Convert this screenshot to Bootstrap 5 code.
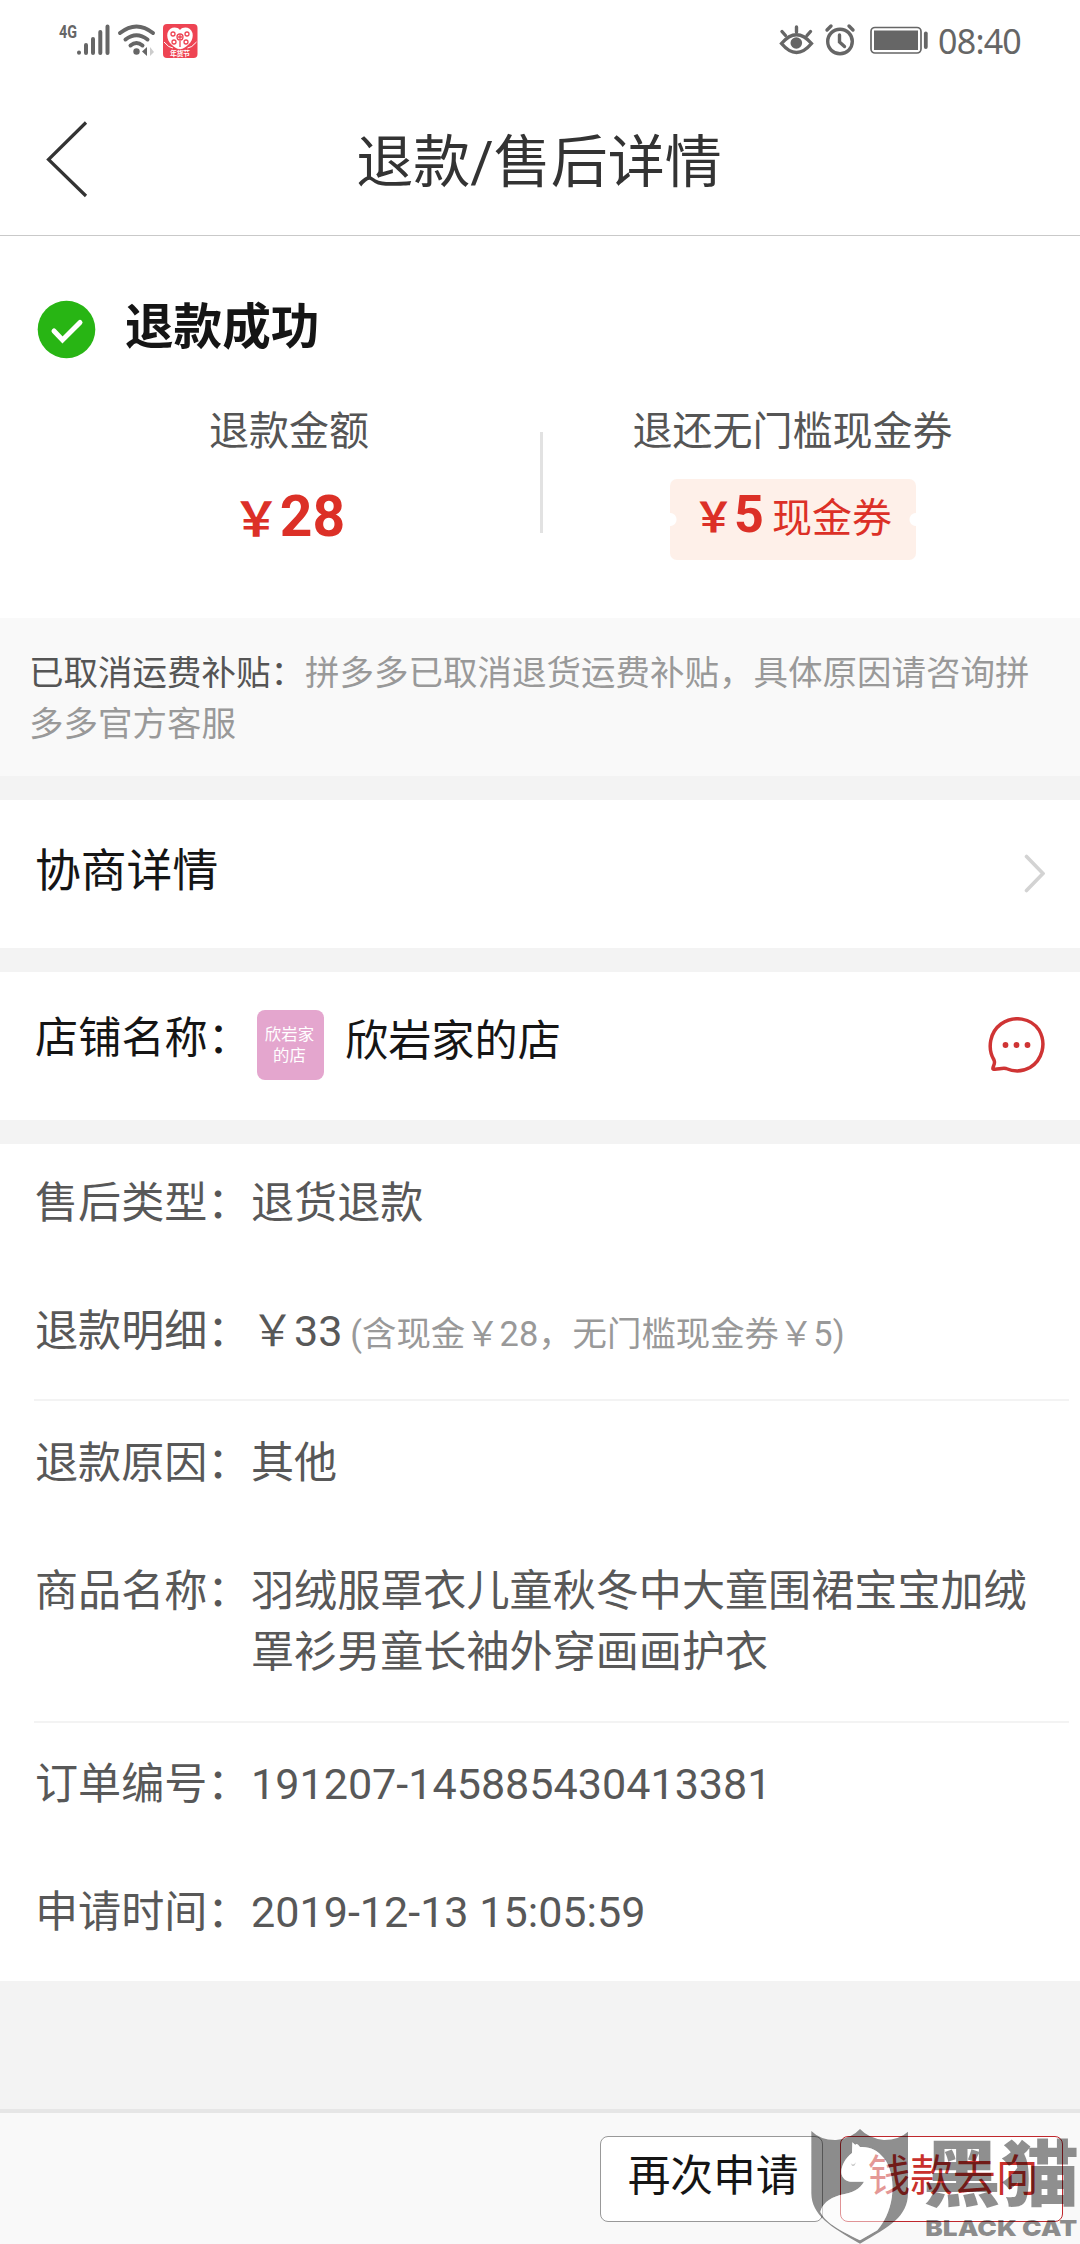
<!DOCTYPE html>
<html lang="zh-CN">
<head>
<meta charset="utf-8">
<meta name="viewport" content="width=device-width, initial-scale=1">
<title>退款/售后详情</title>
<link rel="stylesheet" href="https://cdn.jsdelivr.net/npm/bootstrap@5.3.0/dist/css/bootstrap.min.css">
<style>
body{font-family:Roboto,"Noto Sans CJK SC",sans-serif;background:#f3f3f3;color:#151515;height:2244px;overflow:hidden}
svg{display:block;flex:none}
.status-bar{height:80px;padding:0 59px 0 56px}
.status-right{padding-top:20px;color:#666}
.clock{font:34px/42px "Noto Sans",sans-serif;letter-spacing:-.8px;margin-left:9px}
.title-bar{height:156px;border-bottom:1px solid #c9c9c9;padding:2px 46px 0 44px}
.title-text{font-size:57px;line-height:80px;color:#333;padding-top:8px}
.spacer{width:46px}
.state-box{height:382px;padding-top:58px}
.state-head{padding-left:37px;gap:29px;height:70px}
.state-name{font-size:48.6px;line-height:60px;font-weight:700;padding-bottom:3px}
.amounts{padding-top:33px}
.amount-label{font-size:40px;line-height:60px;color:#555;padding-top:5px}
.amount-col{width:500px;height:180px}
.amount-col:first-child{width:578px}
.v-rule{width:3px;height:101px;background:#e2e2e2;margin:35px -38px 0 -38px}
.red-money{color:#dc3027;font-weight:700}
.money-big{font-size:57px;line-height:70px;margin-top:20px}
.money-big .yen{font-size:47px}
.coupon{width:246px;height:81px;margin-top:17px;border-radius:7px;background:radial-gradient(circle at 0 50%,#fff 6px,transparent 7px),radial-gradient(circle at 100% 50%,#fff 6px,transparent 7px),#fef0e9;line-height:71px}
.coupon .yen{font-size:41px}
.coupon .num{font-size:52px}
.coupon .word{font-size:40px;font-weight:400;margin-left:8px}
.notice{height:158px;background:#f9f9f9;font-size:34.5px;line-height:51px;color:#999;padding:30px 28px 0 29px}
.notice b{font-weight:400;color:#555}
.strip{margin-top:24px;height:148px;padding:0 35px 0 35px}
.nego{font-size:45.8px;line-height:60px;padding-bottom:4px}
.shop{font-size:43.2px;line-height:60px}
.shop-tag{padding-bottom:15px}
.avatar{width:67px;height:70px;border-radius:8px;background:#e4a6ce;color:#fff;font-size:16.4px;line-height:21px;margin:0 21px 3px 6px;padding-right:2px;text-align:center}
.shop-name{padding-bottom:9px}
.chat{margin-bottom:2px}
.detail{margin-top:24px;height:837px;font-size:43.1px;line-height:61px;color:#585858}
.group{margin:0 11px 0 34px;border-bottom:2px solid #f3f3f3;padding-top:3px}
.group:first-child{padding-top:2px;height:257px}
.group:nth-child(2){height:322px}
.group:last-child{border:0;padding-top:2px}
.item{padding:29px 0 38px 1px}
.group:first-child .item:first-child{padding-top:27px}
.item dt{width:216px;font-weight:400;flex:none}
.item dd{margin:0}
.item small.sub{font-size:34.4px;color:#999;margin-left:-3px}
.foot{margin-top:128px;height:135px;background:#f9f9f9;border-top:4px solid #e6e6e6;gap:17px;padding:23px 17px 0 0}
.act{width:223px;height:86px;border:1.5px solid #999;border-radius:8px;background:#fff;font-size:42.7px;line-height:68px;color:#151515;padding:0 0 6px 3px;flex:none}
.act.warn{border-color:#c0282d;color:#c9302c}
.watermark{position:absolute;right:0;top:2115px}
</style>
<script src="https://cdn.jsdelivr.net/npm/bootstrap@5.3.0/dist/js/bootstrap.bundle.min.js"></script>
</head>
<body class="position-relative">
<header class="bg-white">
  <div class="status-bar d-flex justify-content-between align-items-start">
    <svg width="150" height="70" viewBox="56 0 150 70" fill="#666">
      <text x="59" y="38" font-family="Roboto" font-weight="700" font-size="19" textLength="18" lengthAdjust="spacingAndGlyphs">4G</text>
      <g stroke="#666" stroke-width="4" stroke-linecap="round"><path d="M79 52.5v.2M86 45v8M93 39v14M100.300 32v21M107.500 26.500v26.500"/></g>
      <g fill="none" stroke="#666" stroke-width="4" stroke-linecap="round"><path d="M120 33q16.500-13 33 0M125.500 39.500q11-8.500 22 0M130.500 45.500q6-5 12 0"/></g>
      <circle cx="136.500" cy="51.500" r="3.200"/><path d="M142 51.500l5-4.500v9z"/><path d="M150 47v9l4-4z" fill="#ccc"/>
      <rect x="163" y="24" width="34.500" height="34" rx="4" fill="#ee4453"/>
      <path d="M180 50C171 46 166 40 167.500 33c2-6 9-7 12.500-3 3.500-4 10.500-3 12.500 3C194 40 189 46 180 50z" fill="#fff"/>
      <g fill="none" stroke="#ee4453" stroke-width="1.300"><circle cx="180" cy="37" r="3"/><circle cx="173" cy="34" r="2"/><circle cx="187" cy="34" r="2"/><circle cx="174" cy="42" r="2"/><circle cx="186" cy="42" r="2"/><path d="M180 35v4M178 37h4M180 41v6"/></g>
      <path d="M164 43q16 12 32.500 0v5q-4 3-7 2h-19q-4 1-6.500-2z" fill="#ee4453"/>
      <path d="M164 42q5 6 9 6M196.500 42q-5 6-9 6" fill="none" stroke="#fff" stroke-width="1"/>
      <text x="170" y="56" font-family="Noto Sans CJK SC" font-size="7" font-weight="700" fill="#fff" textLength="20">年货节</text>
    </svg>
    <div class="status-right d-flex align-items-start">
      <svg width="150" height="40" viewBox="779 20 150 40" fill="none" stroke="#666" stroke-width="3.400" stroke-linecap="round">
        <path d="M781.500 43.500q15-17.500 30 0q-15 18-30 0z"/><circle cx="796.300" cy="43" r="5.800" fill="#666" stroke="none"/><path d="M796.500 27v5M782 31.500l3.500 4M810.500 31.500l-3.500 4"/>
        <circle cx="840" cy="41.500" r="12.300"/><path d="M839.500 35v7l5 4.500M827 30l4-4M853 30l-4-4"/>
        <rect x="871" y="27.500" width="50" height="25.500" rx="4" stroke-width="1.700"/><rect x="874" y="30.500" width="44" height="19.500" fill="#666" stroke="none"/><path d="M925.800 33.500v13.500" stroke-width="3.800"/>
      </svg>
      <span class="clock">08:40</span>
    </div>
  </div>
  <div class="title-bar d-flex align-items-center justify-content-between">
    <svg width="46" height="80" viewBox="0 0 46 80" fill="none" stroke="#333" stroke-width="3.200"><path d="M42 3.500L4.500 40.500 42 77"/></svg>
    <div class="title-text">退款/售后详情</div>
    <span class="spacer"></span>
  </div>
</header>
<main>
  <section class="state-box bg-white">
    <div class="state-head d-flex align-items-center">
      <svg width="59" height="59" viewBox="0 0 59 59"><circle cx="29.500" cy="29.500" r="28.800" fill="#28b514"/><path d="M17 31l8.500 9L43 22.500" fill="none" stroke="#fff" stroke-width="5" stroke-linecap="round"/></svg>
      <div class="state-name">退款成功</div>
    </div>
    <div class="amounts d-flex align-items-start justify-content-between">
      <div class="amount-col text-center">
        <div class="amount-label">退款金额</div>
        <div class="money-big red-money"><span class="yen">￥</span>28</div>
      </div>
      <div class="v-rule"></div>
      <div class="amount-col d-flex flex-column align-items-center me-auto ms-auto">
        <div class="amount-label">退还无门槛现金券</div>
        <div class="coupon red-money text-center"><span class="yen">￥</span><span class="num">5</span><span class="word">现金券</span></div>
      </div>
    </div>
  </section>
  <section class="notice"><b>已取消运费补贴：</b>拼多多已取消退货运费补贴，具体原因请咨询拼多多官方客服</section>
  <section class="strip bg-white d-flex align-items-center justify-content-between">
    <div class="nego">协商详情</div>
    <svg width="22" height="40" viewBox="0 0 22 40" fill="none" stroke="#d3d3d3" stroke-width="3.600" stroke-linecap="round"><path d="M3.500 2.500L20 19.500 3.500 36.500"/></svg>
  </section>
  <section class="strip shop bg-white d-flex align-items-center">
    <div class="shop-tag">店铺名称：</div>
    <div class="avatar d-flex flex-column justify-content-center">欣岩家<br>的店</div>
    <div class="shop-name">欣岩家的店</div>
    <svg class="chat ms-auto" width="57" height="57" viewBox="0 0 57 57" fill="none" stroke="#cf3434" stroke-width="3.500" stroke-linejoin="round"><path d="M6 43C-1 31 2 15 13 7 26-2 43 1 51 13 59 27 54 43 42 50.500 34 55 25 54.500 18 51.500 14 50.500 9 53 5 52 4 50 8 47 6 43z"/><g fill="#cf3434" stroke="none"><circle cx="17.500" cy="28" r="2.900"/><circle cx="28.500" cy="28" r="2.900"/><circle cx="39.500" cy="28" r="2.900"/></g></svg>
  </section>
  <section class="detail bg-white">
    <div class="group">
      <dl class="item d-flex mb-0"><dt>售后类型：</dt><dd>退货退款</dd></dl>
      <dl class="item d-flex mb-0"><dt>退款明细：</dt><dd>￥33 <small class="sub">(含现金￥28，无门槛现金券￥5)</small></dd></dl>
    </div>
    <div class="group">
      <dl class="item d-flex mb-0"><dt>退款原因：</dt><dd>其他</dd></dl>
      <dl class="item d-flex mb-0"><dt>商品名称：</dt><dd>羽绒服罩衣儿童秋冬中大童围裙宝宝加绒罩衫男童长袖外穿画画护衣</dd></dl>
    </div>
    <div class="group">
      <dl class="item d-flex mb-0"><dt>订单编号：</dt><dd>191207-145885430413381</dd></dl>
      <dl class="item d-flex mb-0"><dt>申请时间：</dt><dd>2019-12-13 15:05:59</dd></dl>
    </div>
  </section>
</main>
<footer class="foot d-flex justify-content-end align-items-start">
  <button class="btn act">再次申请</button>
  <button class="btn act warn">钱款去向</button>
</footer>
<svg class="watermark" width="280" height="129" viewBox="0 0 840 387" fill="#000" fill-opacity=".44">
  <path fill-rule="evenodd" d="M34 48Q62 76 108 75Q155 70 180 42Q206 70 252 75Q298 74 324 50V235C323 305 270 335 180 386C90 335 35 300 34 235zM157 82L156 114C136 130 124 150 124 172C124 190 140 200 152 200H192C180 222 160 232 120 240C85 250 65 270 61 291C75 320 110 342 180 376L232 346C290 280 288 175 252 130C232 104 208 94 180 96Q170 82 166 90zM152 144q8 10 15-2q-2 14-11 10z"/>
  <path fill="#fff" fill-opacity=".5" d="M157 82L156 114C136 130 124 150 124 172C124 190 140 200 152 200H192C180 222 160 232 120 240C85 250 65 270 61 291C75 320 110 342 180 376L232 346C290 280 288 175 252 130C232 104 208 94 180 96Q170 82 166 90z"/>
  <text x="368" y="254" font-family="Noto Sans CJK SC" font-weight="900" font-size="214" textLength="470" lengthAdjust="spacingAndGlyphs">黑猫</text>
  <text x="376" y="363" font-family="Inter, Liberation Sans" font-weight="900" font-size="66" textLength="456" lengthAdjust="spacingAndGlyphs">BLACK CAT</text>
</svg>
</body>
</html>
